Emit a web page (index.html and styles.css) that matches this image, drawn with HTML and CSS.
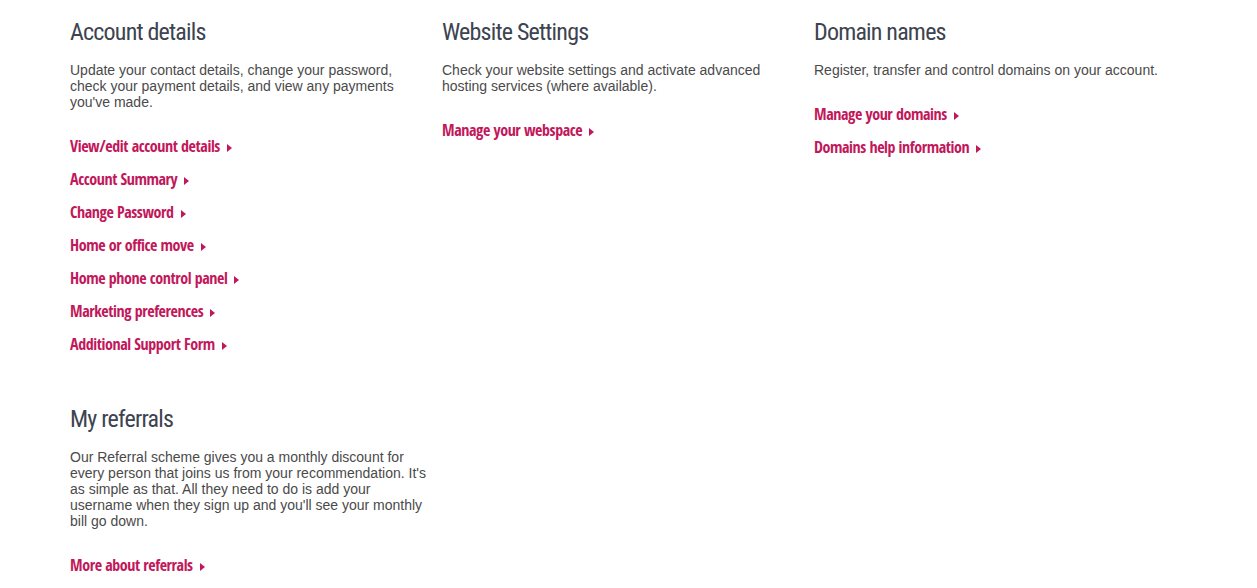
FILE: index.html
```html
<!DOCTYPE html>
<html lang="en">
<head>
    <meta charset="UTF-8">
    <meta name="viewport" content="width=device-width, initial-scale=1.0">
    <title>My account</title>
    <link rel="stylesheet" href="styles.css">
</head>
<body>
    <div class="container">
        <div class="panel-grid">
            <div class="panel">
                <h2>Account details</h2>
                <p>Update your contact details, change your password, check your payment details, and view any payments you've made.</p>
                <ul class="links">
                    <li><a href="#">View/edit account details</a></li>
                    <li><a href="#">Account Summary</a></li>
                    <li><a href="#">Change Password</a></li>
                    <li><a href="#">Home or office move</a></li>
                    <li><a href="#">Home phone control panel</a></li>
                    <li><a href="#">Marketing preferences</a></li>
                    <li><a href="#">Additional Support Form</a></li>
                </ul>
            </div>

            <div class="panel">
                <h2>Website Settings</h2>
                <p>Check your website settings and activate advanced hosting services (where available).</p>
                <ul class="links">
                    <li><a href="#">Manage your webspace</a></li>
                </ul>
            </div>

            <div class="panel">
                <h2>Domain names</h2>
                <p>Register, transfer and control domains on your account.</p>
                <ul class="links">
                    <li><a href="#">Manage your domains</a></li>
                    <li><a href="#">Domains help information</a></li>
                </ul>
            </div>

            <div class="panel">
                <h2>My referrals</h2>
                <p>Our Referral scheme gives you a monthly discount for every person that joins us from your recommendation. It's as simple as that. All they need to do is add your username when they sign up and you'll see your monthly bill go down.</p>
                <ul class="links">
                    <li><a href="#">More about referrals</a></li>
                </ul>
            </div>
        </div>
    </div>
</body>
</html>
```

FILE: styles.css
```css
body {
    margin: 0;
    background: #fff;
    font-family: 'Liberation Sans', Arial, sans-serif;
    color: #4a4a4a;
}
.container {
    padding: 18px 0 0 70px;
}
.panel-grid {
    display: grid;
    grid-template-columns: repeat(3, 360px);
    column-gap: 12px;
    row-gap: 44px;
}
.panel h2 {
    margin: 0 0 16px;
    font-family: 'Roboto Condensed', 'Open Sans Condensed', sans-serif;
    font-weight: normal;
    font-size: 24px;
    line-height: 28px;
    letter-spacing: -0.8px;
    color: #3d4350;
}
.panel p {
    margin: 0 0 20px;
    font-size: 14px;
    line-height: 16px;
}
.links {
    list-style: none;
    margin: 0;
    padding: 0;
}
.links li {
    line-height: 33px;
}
.links a {
    font-family: 'Open Sans Condensed', 'Roboto Condensed', sans-serif;
    font-weight: bold;
    font-size: 16px;
    letter-spacing: -0.4px;
    color: #c2185b;
    text-decoration: none;
}
/* little play-arrow after each link */
.links a::after {
    content: "";
    display: inline-block;
    margin-left: 7px;
    border-top: 4px solid transparent;
    border-bottom: 4px solid transparent;
    border-left: 5px solid #c2185b;
    vertical-align: 0;
}
```
